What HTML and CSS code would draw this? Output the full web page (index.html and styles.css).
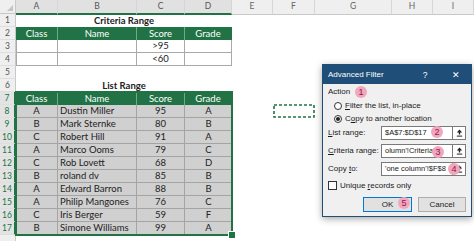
FILE: index.html
```html
<!DOCTYPE html>
<html>
<head>
<meta charset="utf-8">
<link rel="stylesheet" href="styles.css">
</head>
<body>
<div class="sheet">
  <div class="rowhdr">
    <div class="corner"><span class="tri"></span></div>
    <div class="rn">1</div><div class="rn">2</div><div class="rn">3</div><div class="rn">4</div>
    <div class="rn">5</div><div class="rn">6</div>
    <div class="rn sel">7</div><div class="rn sel">8</div><div class="rn sel">9</div><div class="rn sel">10</div>
    <div class="rn sel">11</div><div class="rn sel">12</div><div class="rn sel">13</div><div class="rn sel">14</div>
    <div class="rn sel">15</div><div class="rn sel">16</div><div class="rn sel">17</div>
    <div class="rn"></div>
  </div>
  <div class="main">
    <div class="colhdr">
      <div class="ch sel">A</div><div class="ch sel">B</div><div class="ch sel">C</div><div class="ch sel">D</div>
      <div class="ch">E</div><div class="ch">F</div><div class="ch">G</div><div class="ch">H</div><div class="ch">I</div>
    </div>
    <div class="cells">
      <div class="criteria">
        <div class="ttl">Criteria Range</div>
        <div class="th">Class</div><div class="th">Name</div><div class="th">Score</div><div class="th last">Grade</div>
        <div class="td"></div><div class="td"></div><div class="td c">&gt;95</div><div class="td"></div>
        <div class="td"></div><div class="td"></div><div class="td c">&lt;60</div><div class="td"></div>
      </div>
      <div class="listttl">List Range</div>
      <div class="list">
        <div class="th">Class</div><div class="th">Name</div><div class="th">Score</div><div class="th last">Grade</div>
        <div class="dc c">A</div><div class="dc">Dustin Miller</div><div class="dc c">95</div><div class="dc c last">A</div>
        <div class="dc c">B</div><div class="dc">Mark Sternke</div><div class="dc c">80</div><div class="dc c last">B</div>
        <div class="dc c">C</div><div class="dc">Robert Hill</div><div class="dc c">91</div><div class="dc c last">A</div>
        <div class="dc c">A</div><div class="dc">Marco Ooms</div><div class="dc c">79</div><div class="dc c last">C</div>
        <div class="dc c">C</div><div class="dc">Rob Lovett</div><div class="dc c">68</div><div class="dc c last">D</div>
        <div class="dc c">B</div><div class="dc">roland dv</div><div class="dc c">85</div><div class="dc c last">B</div>
        <div class="dc c">A</div><div class="dc">Edward Barron</div><div class="dc c">88</div><div class="dc c last">B</div>
        <div class="dc c">A</div><div class="dc">Philip Mangones</div><div class="dc c">76</div><div class="dc c last">C</div>
        <div class="dc c">C</div><div class="dc">Iris Berger</div><div class="dc c">59</div><div class="dc c last">F</div>
        <div class="dc c">B</div><div class="dc">Simone Williams</div><div class="dc c">99</div><div class="dc c last">A</div>
      </div>
      <div class="ants">
        <svg width="42" height="14" viewBox="0 0 42 14"><rect x="1" y="1" width="40" height="12" fill="none" stroke="#217346" stroke-width="1.6" stroke-dasharray="3 2"/></svg>
      </div>
    </div>
  </div>
</div>

<div class="dlg">
  <div class="dlg-title"><span class="dt">Advanced Filter</span><span class="q">?</span><span class="x">✕</span></div>
  <div class="dlg-body">
    <div class="act">Action</div>
    <div class="opt"><span class="radio"></span><span><u>F</u>ilter the list, in-place</span></div>
    <div class="opt"><span class="radio on"></span><span>C<u>o</u>py to another location</span></div>
    <div class="fld first"><span class="lbl"><u>L</u>ist range:</span><span class="inp">$A$7:$D$17</span><span class="pick"><svg width="7" height="8" viewBox="0 0 7 8"><path d="M3.5 0.5 L0.8 3.6 H2.8 V5.6 H4.2 V3.6 H6.2 Z" fill="#222"/><rect x="0.8" y="6.6" width="5.4" height="1" fill="#222"/></svg></span></div>
    <div class="fld"><span class="lbl"><u>C</u>riteria range:</span><span class="inp">olumn'!Criteria</span><span class="pick"><svg width="7" height="8" viewBox="0 0 7 8"><path d="M3.5 0.5 L0.8 3.6 H2.8 V5.6 H4.2 V3.6 H6.2 Z" fill="#222"/><rect x="0.8" y="6.6" width="5.4" height="1" fill="#222"/></svg></span></div>
    <div class="fld"><span class="lbl">Copy <u>t</u>o:</span><span class="inp">'one column'!$F$8</span><span class="pick"><svg width="7" height="8" viewBox="0 0 7 8"><path d="M3.5 0.5 L0.8 3.6 H2.8 V5.6 H4.2 V3.6 H6.2 Z" fill="#222"/><rect x="0.8" y="6.6" width="5.4" height="1" fill="#222"/></svg></span></div>
    <div class="chk"><span class="box"></span><span>Unique <u>r</u>ecords only</span></div>
    <div class="btns"><span class="btn ok">OK</span><span class="btn">Cancel</span></div>
  </div>
  <span class="badge b1">1</span>
  <span class="badge b2">2</span>
  <span class="badge b3">3</span>
  <span class="badge b4">4</span>
  <span class="badge b5">5</span>
</div>
</body>
</html>
```

FILE: styles.css
```css
* { box-sizing: border-box; }
html, body { margin: 0; padding: 0; }
body {
  width: 474px;
  height: 241px;
  overflow: hidden;
  background: #fff;
  position: relative;
  font-family: Lato, "Liberation Sans", sans-serif;
  color: #222;
}
.sheet { display: flex; }

.rowhdr {
  width: 16px;
  flex: none;
  display: flex;
  flex-direction: column;
  background: #efefef;
}
.corner {
  height: 14px;
  position: relative;
  border-right: 1px solid #c8c8c8;
  border-bottom: 1px solid #c8c8c8;
}
.tri {
  position: absolute;
  right: 2px;
  bottom: 2px;
  width: 0;
  height: 0;
  border-left: 6px solid transparent;
  border-bottom: 6px solid #c4c4c4;
}
.rn {
  height: 13px;
  flex: none;
  font-size: 8.5px;
  line-height: 13px;
  text-align: center;
  color: #555;
  border-right: 1px solid #c8c8c8;
  border-bottom: 1px solid #dedede;
}
.rn.sel {
  color: #217346;
  background: #e3e3e3;
  border-right: 2px solid #217346;
}

.main { flex: none; width: 458px; }
.colhdr {
  display: grid;
  grid-template-columns: 42px 79px 48px 47px 41px 42px 77px 41px 41px;
  height: 14px;
  background: #efefef;
}
.ch {
  font-size: 8.5px;
  line-height: 13px;
  text-align: center;
  color: #666;
  border-right: 1px solid #d6d6d6;
  border-bottom: 1px solid #c8c8c8;
}
.ch.sel {
  background: #e1e1e1;
  color: #555;
  border-bottom: 2px solid #217346;
}

.cells {
  display: grid;
  grid-template-columns: 42px 79px 48px 47px 41px 42px 77px 41px 41px;
  grid-template-rows: repeat(18, 13px);
  font-size: 9.5px;
}
.criteria {
  grid-column: 1 / 5;
  grid-row: 1 / 5;
  display: grid;
  grid-template-columns: 42px 79px 48px 47px;
  grid-template-rows: repeat(4, 13px);
}
.ttl, .listttl {
  grid-column: 1 / 5;
  font-weight: bold;
  text-align: center;
  line-height: 13px;
}
.listttl { grid-row: 6; }
.th {
  background: #217346;
  color: #fff;
  text-align: center;
  line-height: 13px;
  border-right: 1px solid #6fa98a;
}
.th.last { border-right: 1px solid #217346; }
.td {
  line-height: 12px;
  border-right: 1px solid #a9a9a9;
  border-bottom: 1px solid #a9a9a9;
}
.criteria .td:nth-child(4n+6) { border-left: 1px solid #a9a9a9; }
.c { text-align: center; }

.list {
  grid-column: 1 / 5;
  grid-row: 7 / 18;
  display: grid;
  grid-template-columns: 42px 79px 48px 47px;
  grid-template-rows: repeat(11, 13px);
  position: relative;
  outline: 2px solid #217346;
  outline-offset: -1px;
}
.list::after {
  content: "";
  position: absolute;
  right: -4px;
  bottom: -4px;
  width: 6px;
  height: 6px;
  background: #217346;
  border: 1px solid #fff;
}
.dc {
  background: #d0d0d0;
  line-height: 12px;
  padding-left: 2px;
  border-right: 1px solid #a4a4a4;
  border-bottom: 1px solid #a4a4a4;
  white-space: nowrap;
  overflow: hidden;
}
.dc.c { padding-left: 0; }
.dc.last { border-right: none; }

.ants {
  grid-column: 6;
  grid-row: 8;
  margin-top: -1px;
}
.ants svg { display: block; }

/* dialog */
.dlg {
  position: absolute;
  left: 322px;
  top: 64px;
  width: 150px;
  height: 153px;
  background: #f0f0f0;
  border: 1px solid #1f4e79;
  box-shadow: 0 2px 7px rgba(0,0,0,0.35);
  font-family: "Liberation Sans", Arial, sans-serif;
  font-size: 8px;
  color: #1a1a1a;
}
.dlg-title {
  height: 19px;
  background: #1f4e79;
  color: #fff;
  display: flex;
  align-items: center;
  padding-left: 5px;
  font-size: 8px;
}
.dt { flex: 1; }
.q { width: 10px; text-align: center; margin-right: 21px; font-size: 8.5px; }
.x { width: 10px; text-align: center; margin-right: 10px; font-size: 9px; }
.dlg-body { padding-left: 4px; }
.act { height: 15px; line-height: 15px; margin-left: 1px; }
.opt {
  height: 13px;
  display: flex;
  align-items: center;
  gap: 3px;
  margin-left: 7px;
}
.radio {
  width: 8px;
  height: 8px;
  border: 1px solid #333;
  border-radius: 50%;
  background: #fff;
  position: relative;
}
.radio.on::after {
  content: "";
  position: absolute;
  left: 1px;
  top: 1px;
  width: 4px;
  height: 4px;
  border-radius: 50%;
  background: #222;
}
.fld {
  height: 14px;
  margin-top: 4px;
  display: flex;
  align-items: stretch;
}
.fld.first { margin-top: 1px; }
.lbl { width: 53px; line-height: 14px; margin-left: 1px; }
.inp {
  width: 72px;
  background: #fff;
  border: 1px solid #7a7a7a;
  padding-left: 3px;
  line-height: 12px;
  font-size: 7.5px;
  white-space: nowrap;
  overflow: hidden;
}
.pick {
  width: 13px;
  background: #fff;
  border: 1px solid #7a7a7a;
  border-left: none;
  display: flex;
  align-items: center;
  justify-content: center;
}
.chk {
  height: 12px;
  margin-top: 3px;
  display: flex;
  align-items: center;
  gap: 3px;
  margin-left: 1px;
}
.box {
  width: 9px;
  height: 9px;
  border: 1px solid #333;
  background: #fff;
}
.btns {
  height: 15px;
  margin-top: 6px;
  display: flex;
  gap: 6px;
  padding-left: 36px;
}
.btn {
  width: 48px;
  background: #e1e1e1;
  border: 1px solid #adadad;
  text-align: center;
  line-height: 13px;
}
.btn.ok { width: 49px; border-color: #0078d7; }

.badge {
  position: absolute;
  width: 12px;
  height: 12px;
  border-radius: 50%;
  background: #f2a7bf;
  color: #8e1840;
  font-size: 9px;
  line-height: 12px;
  text-align: center;
}
.b1 { left: 32px; top: 21px; }
.b2 { left: 108px; top: 61px; }
.b3 { left: 109px; top: 81px; }
.b4 { left: 125px; top: 98px; }
.b5 { left: 75px; top: 132px; }
```
